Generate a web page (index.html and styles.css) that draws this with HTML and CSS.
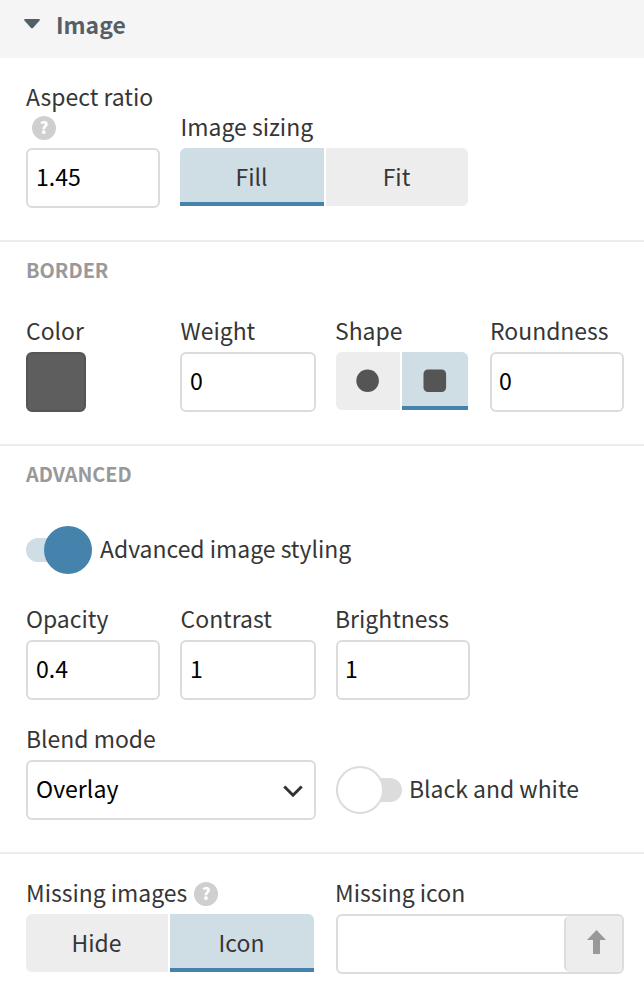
FILE: index.html
```html
<!DOCTYPE html>
<html lang="en">
<head>
<meta charset="utf-8">
<title>Image settings</title>
<link rel="stylesheet" href="styles.css">
</head>
<body>
<main class="panel">
  <header class="panel-header">
    <svg class="caret" width="16" height="10" viewBox="0 0 16 10"><path d="M1 0H15Q16.4 0.3 15.4 1.7L9.2 8.7Q8 9.9 6.8 8.7L0.6 1.7Q-0.4 0.3 1 0Z"/></svg>
    <h1 class="panel-title">Image</h1>
  </header>

  <section class="section section-sizing">
    <div class="grid">
      <div class="field">
        <div class="label label-stacked"><span>Aspect ratio</span><span class="help">?</span></div>
        <div class="input">1.45</div>
      </div>
      <div class="field span-2">
        <div class="label label-inset">Image sizing</div>
        <div class="segments">
          <button class="segment active first w-144">Fill</button>
          <button class="segment last w-142">Fit</button>
        </div>
      </div>
    </div>
  </section>

  <section class="section section-border">
    <h2 class="section-title">BORDER</h2>
    <div class="grid">
      <div class="field">
        <div class="label">Color</div>
        <div class="swatch"></div>
      </div>
      <div class="field">
        <div class="label label-inset">Weight</div>
        <div class="input">0</div>
      </div>
      <div class="field">
        <div class="label label-tight">Shape</div>
        <div class="segments">
          <button class="segment first w-64"><svg width="24" height="24" viewBox="0 0 24 24"><circle cx="11.6" cy="11.7" r="11.3"/></svg></button>
          <button class="segment active last w-66"><svg width="24" height="24" viewBox="0 0 24 24"><rect x="0.5" y="0.4" width="22.6" height="22.6" rx="4.5"/></svg></button>
        </div>
      </div>
      <div class="field">
        <div class="label">Roundness</div>
        <div class="input input-tight">0</div>
      </div>
    </div>
  </section>

  <section class="section section-advanced">
    <h2 class="section-title">ADVANCED</h2>
    <div class="toggle-row">
      <span class="toggle on"><span class="knob"></span></span>
      <span class="toggle-label">Advanced image styling</span>
    </div>
    <div class="grid">
      <div class="field">
        <div class="label">Opacity</div>
        <div class="input">0.4</div>
      </div>
      <div class="field">
        <div class="label label-inset">Contrast</div>
        <div class="input">1</div>
      </div>
      <div class="field">
        <div class="label label-tight">Brightness</div>
        <div class="input input-tight">1</div>
      </div>
    </div>
    <div class="grid blend">
      <div class="field span-2">
        <div class="label">Blend mode</div>
        <div class="input select">Overlay
          <svg width="20" height="13" viewBox="0 0 20 13"><path d="M1.3 1.5L10 10.2L18.7 1.5"/></svg>
        </div>
      </div>
      <div class="toggle-row toggle-row-off span-2">
        <span class="toggle"><span class="knob"></span></span>
        <span class="toggle-label">Black and white</span>
      </div>
    </div>
  </section>

  <section class="section section-missing">
    <div class="grid">
      <div class="field span-2">
        <div class="label"><span>Missing images</span><span class="help">?</span></div>
        <div class="segments">
          <button class="segment first w-142">Hide</button>
          <button class="segment active last w-144">Icon</button>
        </div>
      </div>
      <div class="field span-2">
        <div class="label label-tight">Missing icon</div>
        <div class="upload">
          <button class="upload-button"><svg width="19" height="24" viewBox="0 0 19 24"><path d="M9.5 0L19 10H13V24H6V10H0Z"/></svg></button>
        </div>
      </div>
    </div>
  </section>
</main>
</body>
</html>
```
FILE: styles.css
```css
* { box-sizing: border-box; }

body {
  margin: 0;
  background: #fff;
  color: #363636;
  font-family: "Noto Sans CJK SC", "Noto Sans", sans-serif;
  font-size: 22.95px;
  line-height: 30px;
}

button {
  border: 0;
  padding: 0;
  font: inherit;
  color: inherit;
}

.panel {
  width: 644px;
  height: 1000px;
  overflow: hidden;
}

.panel-header {
  display: flex;
  align-items: flex-start;
  gap: 16px;
  height: 58px;
  padding: 9px 24px 0;
  background: #f5f5f5;
}

.caret { margin-top: 10px; fill: #555f66; }

.panel-title {
  margin: 0;
  font-size: 22.9px;
  font-weight: 700;
  color: #555f66;
}

.section { padding: 0 20px 0 26px; border-bottom: 2px solid #ececec; }
.section-sizing { height: 184px; padding-top: 25px; }
.section-border { height: 204px; padding-top: 13px; }
.section-advanced { height: 408px; padding-top: 13px; }
.section-missing { padding-top: 25px; border-bottom: 0; }

.section-title {
  margin: 0 0 32px;
  font-size: 19.9px;
  font-weight: 700;
  color: #999;
}

.grid {
  display: grid;
  grid-template-columns: 134px 136px 134px 134px;
  column-gap: 20px;
  align-items: end;
}

.span-2 { grid-column: span 2; }

.label {
  display: flex;
  height: 30px;
  margin-bottom: 5px;
  line-height: 26px;
  white-space: nowrap;
}

.label-tight { margin-left: -1px; }
.label-inset { margin-left: 0.6px; }

.label-stacked { flex-direction: column; height: 60px; }

.help {
  width: 24px;
  height: 24px;
  margin: 3px 0 0 7px;
  border-radius: 50%;
  background: #cfcfcf;
  color: #fff;
  font-size: 16.5px;
  font-weight: 900;
  line-height: 23px;
  text-align: center;
}

.label-stacked .help { margin: 7px 0 0 6px; }

.input {
  display: flex;
  align-items: center;
  height: 60px;
  padding: 0 8px 4px;
  border: 2px solid #dcdcdc;
  border-radius: 6px;
  background: #fff;
  color: #000;
  font-size: 23.1px;
}

.input-tight { padding-left: 7px; }

.select { justify-content: space-between; padding-right: 11px; }
.select svg { fill: none; stroke: #333; stroke-width: 3; margin-top: 7px; }

.segments { display: flex; gap: 2px; height: 60px; }

.segment {
  display: flex;
  align-items: center;
  justify-content: center;
  height: 58px;
  padding: 0 1px 2px 0;
  background: #ededed;
}

.segment.first { border-radius: 6px 0 0 6px; }
.segment.last { border-radius: 0 6px 6px 0; }
.segment.active { background: #cfdde5; box-shadow: inset 0 -4px #4583ad; }
.segment.active.first { border-radius: 6px 0 0 0; }
.segment.active.last { border-radius: 0 6px 0 0; }
.segment svg { margin: 1px -1px 0 0; fill: #555; }

.w-64 { width: 64px; }
.w-66 { width: 66px; }
.w-142 { width: 142px; }
.w-144 { width: 144px; }

.swatch {
  width: 60px;
  height: 60px;
  border: 2px solid #555;
  border-radius: 6px;
  background: #5e5e5e;
}

.toggle-row { display: flex; align-items: center; height: 60px; }
.section-advanced > .toggle-row { margin: -1px 0 25px; }

.toggle {
  display: flex;
  align-items: center;
  width: 66px;
  height: 24px;
  margin-right: 8px;
  border-radius: 12px;
  background: #dcdcdc;
}

.toggle.on { justify-content: flex-end; background: #cfdde5; }
.toggle-row-off .toggle { margin-right: 7px; }
.toggle-label { padding-bottom: 4px; }

.knob {
  flex: none;
  width: 48px;
  height: 48px;
  border: 2px solid #dcdcdc;
  border-radius: 50%;
  background: #fff;
}

.toggle.on .knob { border: 0; background: #4583ad; }

.blend { margin-top: 25px; }

.upload {
  display: flex;
  justify-content: flex-end;
  height: 60px;
  border: 2px solid #dcdcdc;
  border-radius: 6px;
}

.upload-button {
  display: flex;
  align-items: center;
  justify-content: center;
  width: 58px;
  padding: 0 0 4px 4px;
  border-left: 2px solid #dcdcdc;
  border-radius: 6px 4px 4px 6px;
  background: #ededed;
}

.upload-button svg { fill: #999; }
```
